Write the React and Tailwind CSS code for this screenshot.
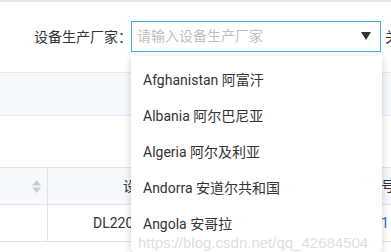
export default function App() {
  const countries = [
    'Afghanistan 阿富汗',
    'Albania 阿尔巴尼亚',
    'Algeria 阿尔及利亚',
    'Andorra 安道尔共和国',
    'Angola 安哥拉',
  ];

  return (
    <div
      className="relative w-[391px] h-[252px] overflow-hidden bg-white border-t-2 border-[#e6e6e6] text-[#333]"
      style={{ fontFamily: 'Roboto, "Noto Sans CJK SC", sans-serif' }}
    >
      {/* toolbar */}
      <div className="flex items-center h-[71px] border-b border-[#e8e8e8] whitespace-nowrap">
        <span className="pl-[34px] w-[131px] shrink-0 text-[14px] leading-none">设备生产厂家：</span>
        <div className="mt-[-2px] w-[250px] h-[31px] border border-[#45a8e6] flex items-center pl-[5px] pr-[9px] shrink-0">
          <span className="flex-1 text-[14px] text-[#bfbfbf] leading-none">请输入设备生产厂家</span>
          <svg width="10" height="8" viewBox="0 0 10 8">
            <polygon points="0,0 10,0 5,8" fill="#333" />
          </svg>
        </div>
        <span className="ml-[4px] text-[14px] leading-none">关</span>
      </div>

      {/* filter band */}
      <div className="h-[43px] bg-[#f5f9fd] border-b border-[#e8e8e8]"></div>

      <div className="h-[51px]"></div>

      {/* table */}
      <div className="border-t border-[#e3e3e3]">
        <div className="flex h-[37px] bg-[#f5f9fd] border-b border-[#e3e3e3] text-[14px]">
          <div className="w-[48px] border-r border-[#e3e3e3] flex items-center justify-end pr-[6px]">
            <svg width="9" height="13" viewBox="0 0 9 13">
              <polygon points="4.5,0 9,5.5 0,5.5" fill="#c8ccd3" />
              <polygon points="0,7.5 9,7.5 4.5,13" fill="#c8ccd3" />
            </svg>
          </div>
          <div className="flex-1 flex items-center pl-[75px]">设备编号</div>
          <div className="w-[10px] flex items-center">号</div>
        </div>
        <div className="flex h-[37px] border-b border-[#e3e3e3] text-[14px]">
          <div className="w-[48px] border-r border-[#e3e3e3]"></div>
          <div className="flex-1 flex items-center pl-[45px]">DL2201</div>
          <div className="w-[10px] flex items-center text-[#1e6fc1]">1</div>
        </div>
      </div>

      {/* dropdown */}
      <div className="absolute left-[131px] top-[54px] w-[251px] h-[196px] bg-white rounded-b-[4px] shadow-[0_2px_8px_rgba(0,0,0,0.18)] pt-[6px]">
        {countries.map((c) => (
          <div key={c} className="h-[36px] flex items-center pl-[12px] text-[14px] text-[#333] whitespace-nowrap">
            {c}
          </div>
        ))}
      </div>

      {/* watermark */}
      <div
        className="absolute left-[138px] top-[230px] text-[15px] text-[rgba(210,210,210,0.75)] whitespace-nowrap pointer-events-none"
        style={{ fontFamily: '"Liberation Sans", sans-serif' }}
      >
        https://blog.csdn.net/qq_42684504
      </div>
    </div>
  );
}
